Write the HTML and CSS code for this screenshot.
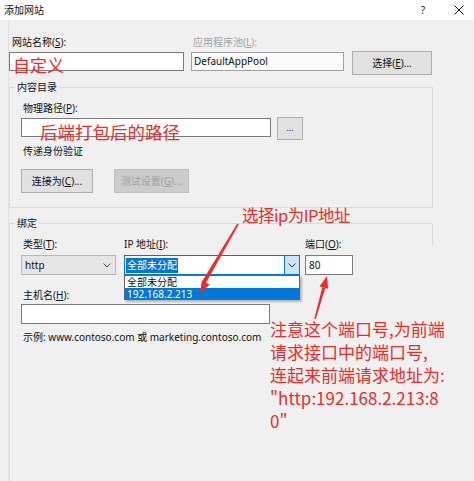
FILE: index.html
```html
<!DOCTYPE html>
<html lang="zh-CN">
<head>
<meta charset="utf-8">
<title>添加网站</title>
<link rel="stylesheet" href="styles.css">
</head>
<body>
<div class="titlebar">
  <span class="title">添加网站</span>
  <span class="help">?</span>
  <svg class="close" width="10" height="10" viewBox="0 0 10 10"><path d="M0.5 0.5 L9.5 9.5 M9.5 0.5 L0.5 9.5" stroke="#111" stroke-width="1" fill="none"/></svg>
</div>
<div class="panel">
  <div class="row1">
    <div class="col-name">
      <div class="lbl">网站名称(<u>S</u>):</div>
      <div class="input name-input"></div>
    </div>
    <div class="col-pool">
      <div class="lbl dis">应用程序池(<u>L</u>):</div>
      <div class="input pool-input">DefaultAppPool</div>
    </div>
    <div class="btn btn-select">选择(<u>E</u>)...</div>
  </div>

  <fieldset class="group g1">
    <legend>内容目录</legend>
    <div class="lbl in">物理路径(<u>P</u>):</div>
    <div class="pathrow">
      <div class="input path-input"></div>
      <div class="btn btn-dots">...</div>
    </div>
    <div class="lbl in auth">传递身份验证</div>
    <div class="btnrow">
      <div class="btn btn-connect">连接为(<u>C</u>)...</div>
      <div class="btn btn-test disabled">测试设置(<u>G</u>)...</div>
    </div>
  </fieldset>

  <fieldset class="group g2">
    <legend>绑定</legend>
    <div class="bindrow">
      <div class="col-type">
        <div class="lbl type-lbl">类型(<u>T</u>):</div>
        <div class="select">
          <span>http</span>
          <svg class="chev" width="8" height="5" viewBox="0 0 8 5"><path d="M0.5 0.5 L4 4 L7.5 0.5" stroke="#555" fill="none"/></svg>
        </div>
      </div>
      <div class="col-ip">
        <div class="lbl">IP 地址(<u>I</u>):</div>
        <div class="combo">
          <span class="combo-text"><span class="sel">全部未分配</span></span>
          <span class="combo-btn"><svg width="8" height="5" viewBox="0 0 8 5"><path d="M0.5 0.5 L4 4 L7.5 0.5" stroke="#333" fill="none"/></svg></span>
        </div>
        <div class="droplist">
          <div class="opt">全部未分配</div>
          <div class="opt active">192.168.2.213</div>
        </div>
      </div>
      <div class="col-port">
        <div class="lbl">端口(<u>O</u>):</div>
        <div class="input port-input">80</div>
      </div>
    </div>
    <div class="lbl in host-lbl">主机名(<u>H</u>):</div>
    <div class="input host-input"></div>
    <div class="lbl in example">示例: www.contoso.com 或 marketing.contoso.com</div>
  </fieldset>
</div>

<div class="note note-name">自定义</div>
<div class="note note-path">后端打包后的路径</div>
<div class="note note-ip">选择ip为IP地址</div>
<div class="note note-port">注意这个端口号,为前端<br>请求接口中的端口号,<br>连起来前端请求地址为:<br>"http:192.168.2.213:8<br>0"</div>

<svg class="arrows" width="474" height="481" viewBox="0 0 474 481">
  <polygon points="237.3,223.6 238.7,224.4 205.6,283.5 202.1,281.5" fill="#ee2b26"/>
  <polygon points="200,293 209.7,284.7 201.9,280.3" fill="#ee2b26"/>
  <polygon points="314.3,318.8 315.7,319.2 325.3,288 322.3,287.2" fill="#ee2b26"/>
  <polygon points="327,276 328.1,288.8 319.5,286.4" fill="#ee2b26"/>
</svg>
</body>
</html>
```

FILE: styles.css
```css
* { box-sizing: border-box; }
html, body { margin: 0; padding: 0; }
body {
  width: 474px;
  height: 481px;
  overflow: hidden;
  background: #f0f0f0;
  font-family: "Noto Sans", "Noto Sans CJK SC", sans-serif;
  font-size: 10px;
  color: #111;
  position: relative;
}
.titlebar {
  height: 20px;
  background: #fff;
  display: flex;
  align-items: center;
  padding-left: 4px;
}
.title { font-size: 10px; line-height: 14px; color: #111; }
.help { margin-left: auto; font-size: 10px; line-height: 14px; color: #222; }
.close { margin-left: 29px; margin-right: 10px; }

.panel {
  margin-left: 8px;
  width: 459px;
  height: 461px;
  border-left: 1px solid #e2e2e2;
  overflow: hidden;
}
.lbl { height: 14px; line-height: 14px; white-space: nowrap; }
.lbl u { text-decoration: underline; text-underline-offset: 1px; }
.dis { color: #a3a3a3; }

.input {
  height: 19px;
  background: #fff;
  border: 1px solid #7a7a7a;
  line-height: 17px;
  padding-left: 2px;
  white-space: nowrap;
  overflow: hidden;
}
.btn {
  height: 24px;
  background: #e1e1e1;
  border: 1px solid #adadad;
  display: flex;
  align-items: center;
  justify-content: center;
  line-height: 14px;
  white-space: nowrap;
}
.btn.disabled { background: #cccccc; border-color: #bfbfbf; color: #a2a2a2; }

.row1 { display: flex; align-items: flex-start; margin-top: 15px; }
.col-name { width: 175px; }
.col-name .lbl { margin-left: 3px; }
.input.name-input { margin-top: 3px; }
.col-pool { width: 153px; margin-left: 7px; }
.col-pool .lbl { margin-left: 2px; }
.input.pool-input { margin-top: 3px; background: #fafafa; border-color: #a0a0a0; }
.btn-select { width: 80px; margin-left: 8px; margin-top: 16px; }

.group {
  margin: 0;
  width: 424px;
  border: 1px solid #dcdcdc;
  padding: 7px 0 14px 5px;
  min-width: 0;
}
.group legend { padding: 0 2px; line-height: 14px; height: 14px; font-size: 10px; }
.g1 { margin-top: 5px; }
.g2 {
  margin-top: 8px;
  padding-bottom: 200px;
  border-right-color: transparent;
  background: linear-gradient(#dcdcdc, #dcdcdc) no-repeat right top / 1px 22px;
  background-origin: border-box;
}
.lbl.in { margin-left: 8px; }

.pathrow { display: flex; align-items: flex-start; margin-top: 2px; }
.input.path-input { width: 250px; margin-left: 6px; margin-top: 1px; }
.btn-dots { width: 26px; height: 23px; margin-left: 6px; font-size: 9px; padding-bottom: 2px; }
.auth { margin-top: 4px; }
.btnrow { display: flex; margin-top: 11px; }
.btn-connect { width: 72px; margin-left: 6px; }
.btn-test { width: 75px; margin-left: 21px; }

.bindrow { display: flex; align-items: flex-start; }
.col-type { width: 95px; margin-left: 6px; }
.type-lbl { margin-left: 2px; }
.select {
  margin-top: 4px;
  height: 20px;
  background: #e5e5e5;
  border: 1px solid #b8b8b8;
  display: flex;
  align-items: center;
  padding-left: 3px;
  padding-right: 4px;
  justify-content: space-between;
}
.col-ip { width: 176px; margin-left: 8px; position: relative; }
.combo {
  margin-top: 4px;
  height: 20px;
  background: #fff;
  border: 1px solid #0078d7;
  display: flex;
}
.combo-text { flex: 1; display: flex; align-items: center; padding-left: 1px; }
.sel { background: #0078d7; color: #fff; line-height: 15px; padding: 0 1px; }
.combo-btn {
  width: 15px;
  background: #cce4f7;
  border-left: 1px solid #0078d7;
  display: flex;
  align-items: center;
  justify-content: center;
}
.droplist {
  position: absolute;
  left: 0;
  top: 38px;
  width: 176px;
  background: #fff;
  border: 1px solid #646464;
  box-shadow: 2px 2px 2px rgba(0,0,0,0.25);
  z-index: 2;
}
.opt { height: 12px; line-height: 12px; padding-left: 2px; white-space: nowrap; }
.opt.active { background: #0078d7; color: #fff; height: 11px; }
.col-port { width: 48px; margin-left: 5px; }
.input.port-input { margin-top: 4px; height: 20px; line-height: 18px; padding-left: 3px; }

.host-lbl { margin-top: 13px; }
.input.host-input { width: 249px; height: 20px; margin-left: 6px; margin-top: 2px; }
.example { margin-top: 6px; }

.note {
  position: absolute;
  color: #ee2b26;
  font-family: "Noto Sans CJK SC", sans-serif;
  font-size: 17.5px;
  line-height: 20px;
  white-space: nowrap;
  z-index: 3;
}
.note-name { left: 13px; top: 55px; font-size: 17px; }
.note-path { left: 40px; top: 122px; }
.note-ip { left: 242px; top: 205px; font-size: 16.5px; letter-spacing: -0.5px; }
.note-port { left: 270px; top: 317px; font-size: 17px; line-height: 23px; }
.arrows { position: absolute; left: 0; top: 0; z-index: 4; pointer-events: none; }
```
